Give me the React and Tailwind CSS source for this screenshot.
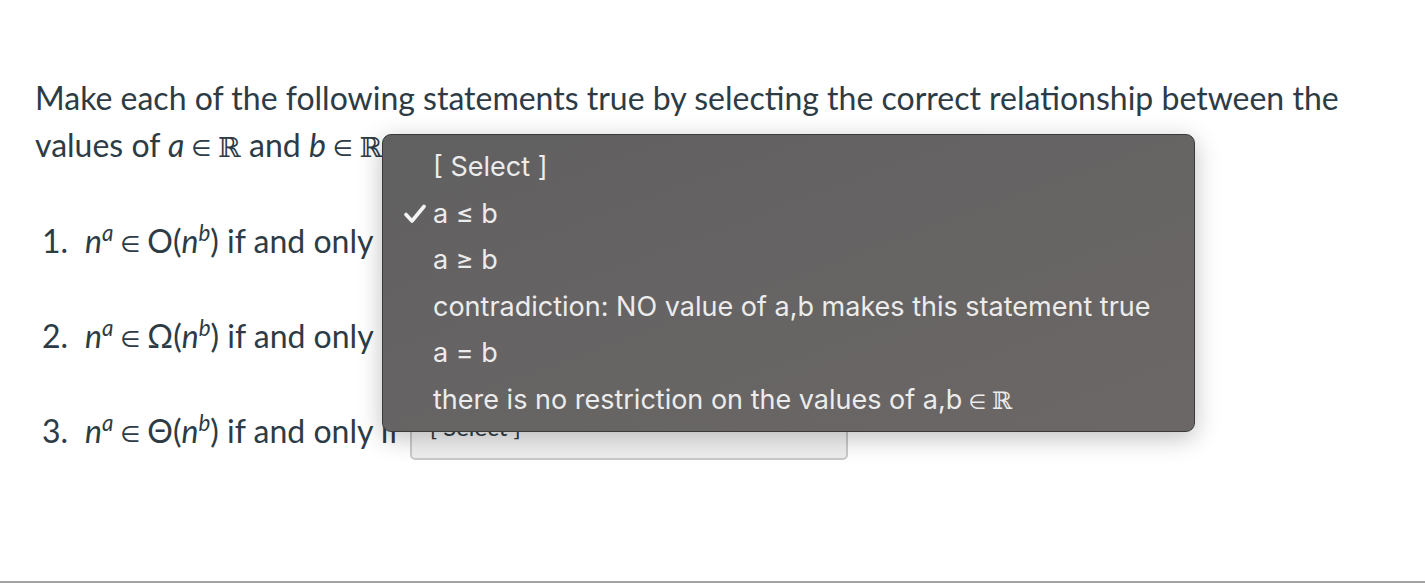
const Sym = ({ children }) => (
  <span className="font-['DejaVu_Sans',sans-serif] text-[0.72em] mx-[0.3em] relative top-[-0.05em]">{children}</span>
);

const Pow = ({ base, exp }) => (
  <span>
    <i>{base}</i>
    <sup className="text-[0.7em] italic top-[-0.55em]">{exp}</sup>
  </span>
);

const Item = ({ num, op }) => (
  <li className="flex items-center h-[46px]">
    <span className="w-[43px] shrink-0">{num}.</span>
    <span className="whitespace-nowrap">
      <Pow base="n" exp="a" />
      <Sym>∈</Sym>
      {op}(<Pow base="n" exp="b" />) if and only if
    </span>
    <div className="ml-[10px] w-[438px] h-[56px] mt-[2px] shrink-0 rounded-[5px] border-2 border-[#c9c9c9] bg-gradient-to-b from-white to-[#ececec] flex items-center justify-between pl-[18px] pr-[18px] text-[24px] text-[#2d3b45]">
      <span className="-mt-[10px]">[ Select ]</span>
      <span className="text-[12px] -mt-[14px]">▼</span>
    </div>
  </li>
);

export default function App() {
  const options = [
    { label: '[ Select ]' },
    { label: 'a ≤ b', checked: true },
    { label: 'a ≥ b' },
    { label: 'contradiction: NO value of a,b makes this statement true' },
    {
      label: 'a = b',
    },
  ];

  return (
    <div className="relative h-[583px] bg-white overflow-hidden border-b-2 border-[#a3a3a3] font-['Lato',sans-serif] text-[#2d3b45]">
      <div className="pl-[35px] pt-[74px] text-[32px]">
        <p className="leading-[47px]">
          Make each of the following statements true by selecting the correct relationship between the
          <br />
          values of <i>a</i>
          <Sym>∈</Sym>
          <span className="font-['DejaVu_Serif',serif] text-[0.85em]">ℝ</span> and <i>b</i>
          <Sym>∈</Sym>
          <span className="font-['DejaVu_Serif',serif] text-[0.85em]">ℝ</span>.
        </p>
        <ol className="mt-[45px] pl-[7px] flex flex-col gap-[49px]">
          <Item num="1" op="O" />
          <Item num="2" op="Ω" />
          <Item num="3" op="Θ" />
        </ol>
      </div>

      <div className="absolute left-[382px] top-[134px] w-[813px] h-[298px] rounded-[9px] border border-[#3a3a3a] bg-gradient-to-br from-[#616061] to-[#6b6766] shadow-[0_6px_24px_rgba(0,0,0,0.25)] pt-[9px] font-['Inter',sans-serif] text-[27px] text-[#ececec]">
        {options.map((o) => (
          <div key={o.label} className="flex items-center h-[46.5px]">
            <span className="w-[50px] flex justify-end pr-[6px]">
              {o.checked && (
                <svg width="24" height="20" viewBox="0 0 24 20" fill="none">
                  <path d="M3 10.5 L9 17 L21 2.5" stroke="#f5f5f5" strokeWidth="3.6" strokeLinecap="round" strokeLinejoin="round" />
                </svg>
              )}
            </span>
            <span>{o.label}</span>
          </div>
        ))}
        <div className="flex items-center h-[46.5px]">
          <span className="w-[50px]" />
          <span>
            there is no restriction on the values of a,b
            <span className="font-['DejaVu_Sans',sans-serif] text-[0.75em] mx-[0.3em]">∈</span>
            <span className="font-['DejaVu_Serif',serif] text-[0.9em]">ℝ</span>
          </span>
        </div>
      </div>
    </div>
  );
}
